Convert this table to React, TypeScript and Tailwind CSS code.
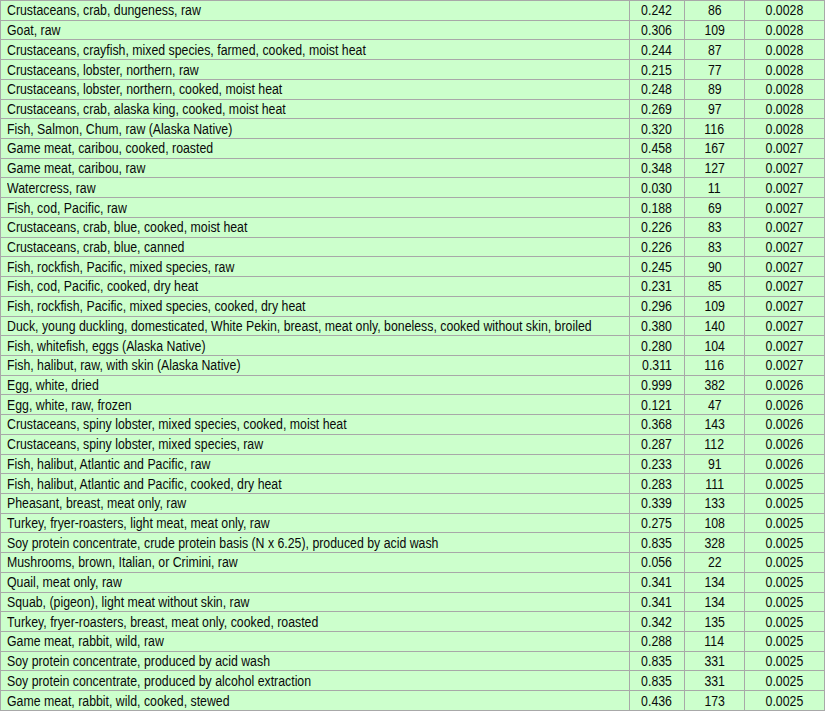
import React from 'react';

type Row = [string, string, string, string];

const rows: Row[] = [
  ['Crustaceans, crab, dungeness, raw', '0.242', '86', '0.0028'],
  ['Goat, raw', '0.306', '109', '0.0028'],
  ['Crustaceans, crayfish, mixed species, farmed, cooked, moist heat', '0.244', '87', '0.0028'],
  ['Crustaceans, lobster, northern, raw', '0.215', '77', '0.0028'],
  ['Crustaceans, lobster, northern, cooked, moist heat', '0.248', '89', '0.0028'],
  ['Crustaceans, crab, alaska king, cooked, moist heat', '0.269', '97', '0.0028'],
  ['Fish, Salmon, Chum, raw (Alaska Native)', '0.320', '116', '0.0028'],
  ['Game meat, caribou, cooked, roasted', '0.458', '167', '0.0027'],
  ['Game meat, caribou, raw', '0.348', '127', '0.0027'],
  ['Watercress, raw', '0.030', '11', '0.0027'],
  ['Fish, cod, Pacific, raw', '0.188', '69', '0.0027'],
  ['Crustaceans, crab, blue, cooked, moist heat', '0.226', '83', '0.0027'],
  ['Crustaceans, crab, blue, canned', '0.226', '83', '0.0027'],
  ['Fish, rockfish, Pacific, mixed species, raw', '0.245', '90', '0.0027'],
  ['Fish, cod, Pacific, cooked, dry heat', '0.231', '85', '0.0027'],
  ['Fish, rockfish, Pacific, mixed species, cooked, dry heat', '0.296', '109', '0.0027'],
  ['Duck, young duckling, domesticated, White Pekin, breast, meat only, boneless, cooked without skin, broiled', '0.380', '140', '0.0027'],
  ['Fish, whitefish, eggs (Alaska Native)', '0.280', '104', '0.0027'],
  ['Fish, halibut, raw, with skin (Alaska Native)', '0.311', '116', '0.0027'],
  ['Egg, white, dried', '0.999', '382', '0.0026'],
  ['Egg, white, raw, frozen', '0.121', '47', '0.0026'],
  ['Crustaceans, spiny lobster, mixed species, cooked, moist heat', '0.368', '143', '0.0026'],
  ['Crustaceans, spiny lobster, mixed species, raw', '0.287', '112', '0.0026'],
  ['Fish, halibut, Atlantic and Pacific, raw', '0.233', '91', '0.0026'],
  ['Fish, halibut, Atlantic and Pacific, cooked, dry heat', '0.283', '111', '0.0025'],
  ['Pheasant, breast, meat only, raw', '0.339', '133', '0.0025'],
  ['Turkey, fryer-roasters, light meat, meat only, raw', '0.275', '108', '0.0025'],
  ['Soy protein concentrate, crude protein basis (N x 6.25), produced by acid wash', '0.835', '328', '0.0025'],
  ['Mushrooms, brown, Italian, or Crimini, raw', '0.056', '22', '0.0025'],
  ['Quail, meat only, raw', '0.341', '134', '0.0025'],
  ['Squab, (pigeon), light meat without skin, raw', '0.341', '134', '0.0025'],
  ['Turkey, fryer-roasters, breast, meat only, cooked, roasted', '0.342', '135', '0.0025'],
  ['Game meat, rabbit, wild, raw', '0.288', '114', '0.0025'],
  ['Soy protein concentrate, produced by acid wash', '0.835', '331', '0.0025'],
  ['Soy protein concentrate, produced by alcohol extraction', '0.835', '331', '0.0025'],
  ['Game meat, rabbit, wild, cooked, stewed', '0.436', '173', '0.0025'],
];

// the page uses a condensed face (Arial Narrow); squeeze Liberation Sans to match
const Narrow = ({ children, left }: { children: React.ReactNode; left?: boolean }) => (
  <span className={`inline-block whitespace-nowrap scale-x-[0.88] ${left ? 'origin-left' : 'origin-center'}`}>
    {children}
  </span>
);

export default function App() {
  return (
    <div className="w-[827px] h-[713px] overflow-hidden bg-white font-['Liberation_Sans','Arial',sans-serif] text-[14px] text-[#0a0a0a]">
      <div className="w-[825px] border-l border-t border-[#a8a8a8] bg-[#ccffcc]">
        {rows.map(([name, a, b, c], i) => (
          <div
            key={i}
            className="grid grid-cols-[629px_55px_60px_80px] h-[19.73px] border-b border-[#a8a8a8] leading-none"
          >
            <div className="flex items-center pl-[6px] border-r border-[#a8a8a8] overflow-hidden">
              <Narrow left>{name}</Narrow>
            </div>
            <div className="flex items-center justify-center border-r border-[#a8a8a8]">
              <Narrow>{a}</Narrow>
            </div>
            <div className="flex items-center justify-center border-r border-[#a8a8a8]">
              <Narrow>{b}</Narrow>
            </div>
            <div className="flex items-center justify-center border-r border-[#a8a8a8]">
              <Narrow>{c}</Narrow>
            </div>
          </div>
        ))}
      </div>
    </div>
  );
}
